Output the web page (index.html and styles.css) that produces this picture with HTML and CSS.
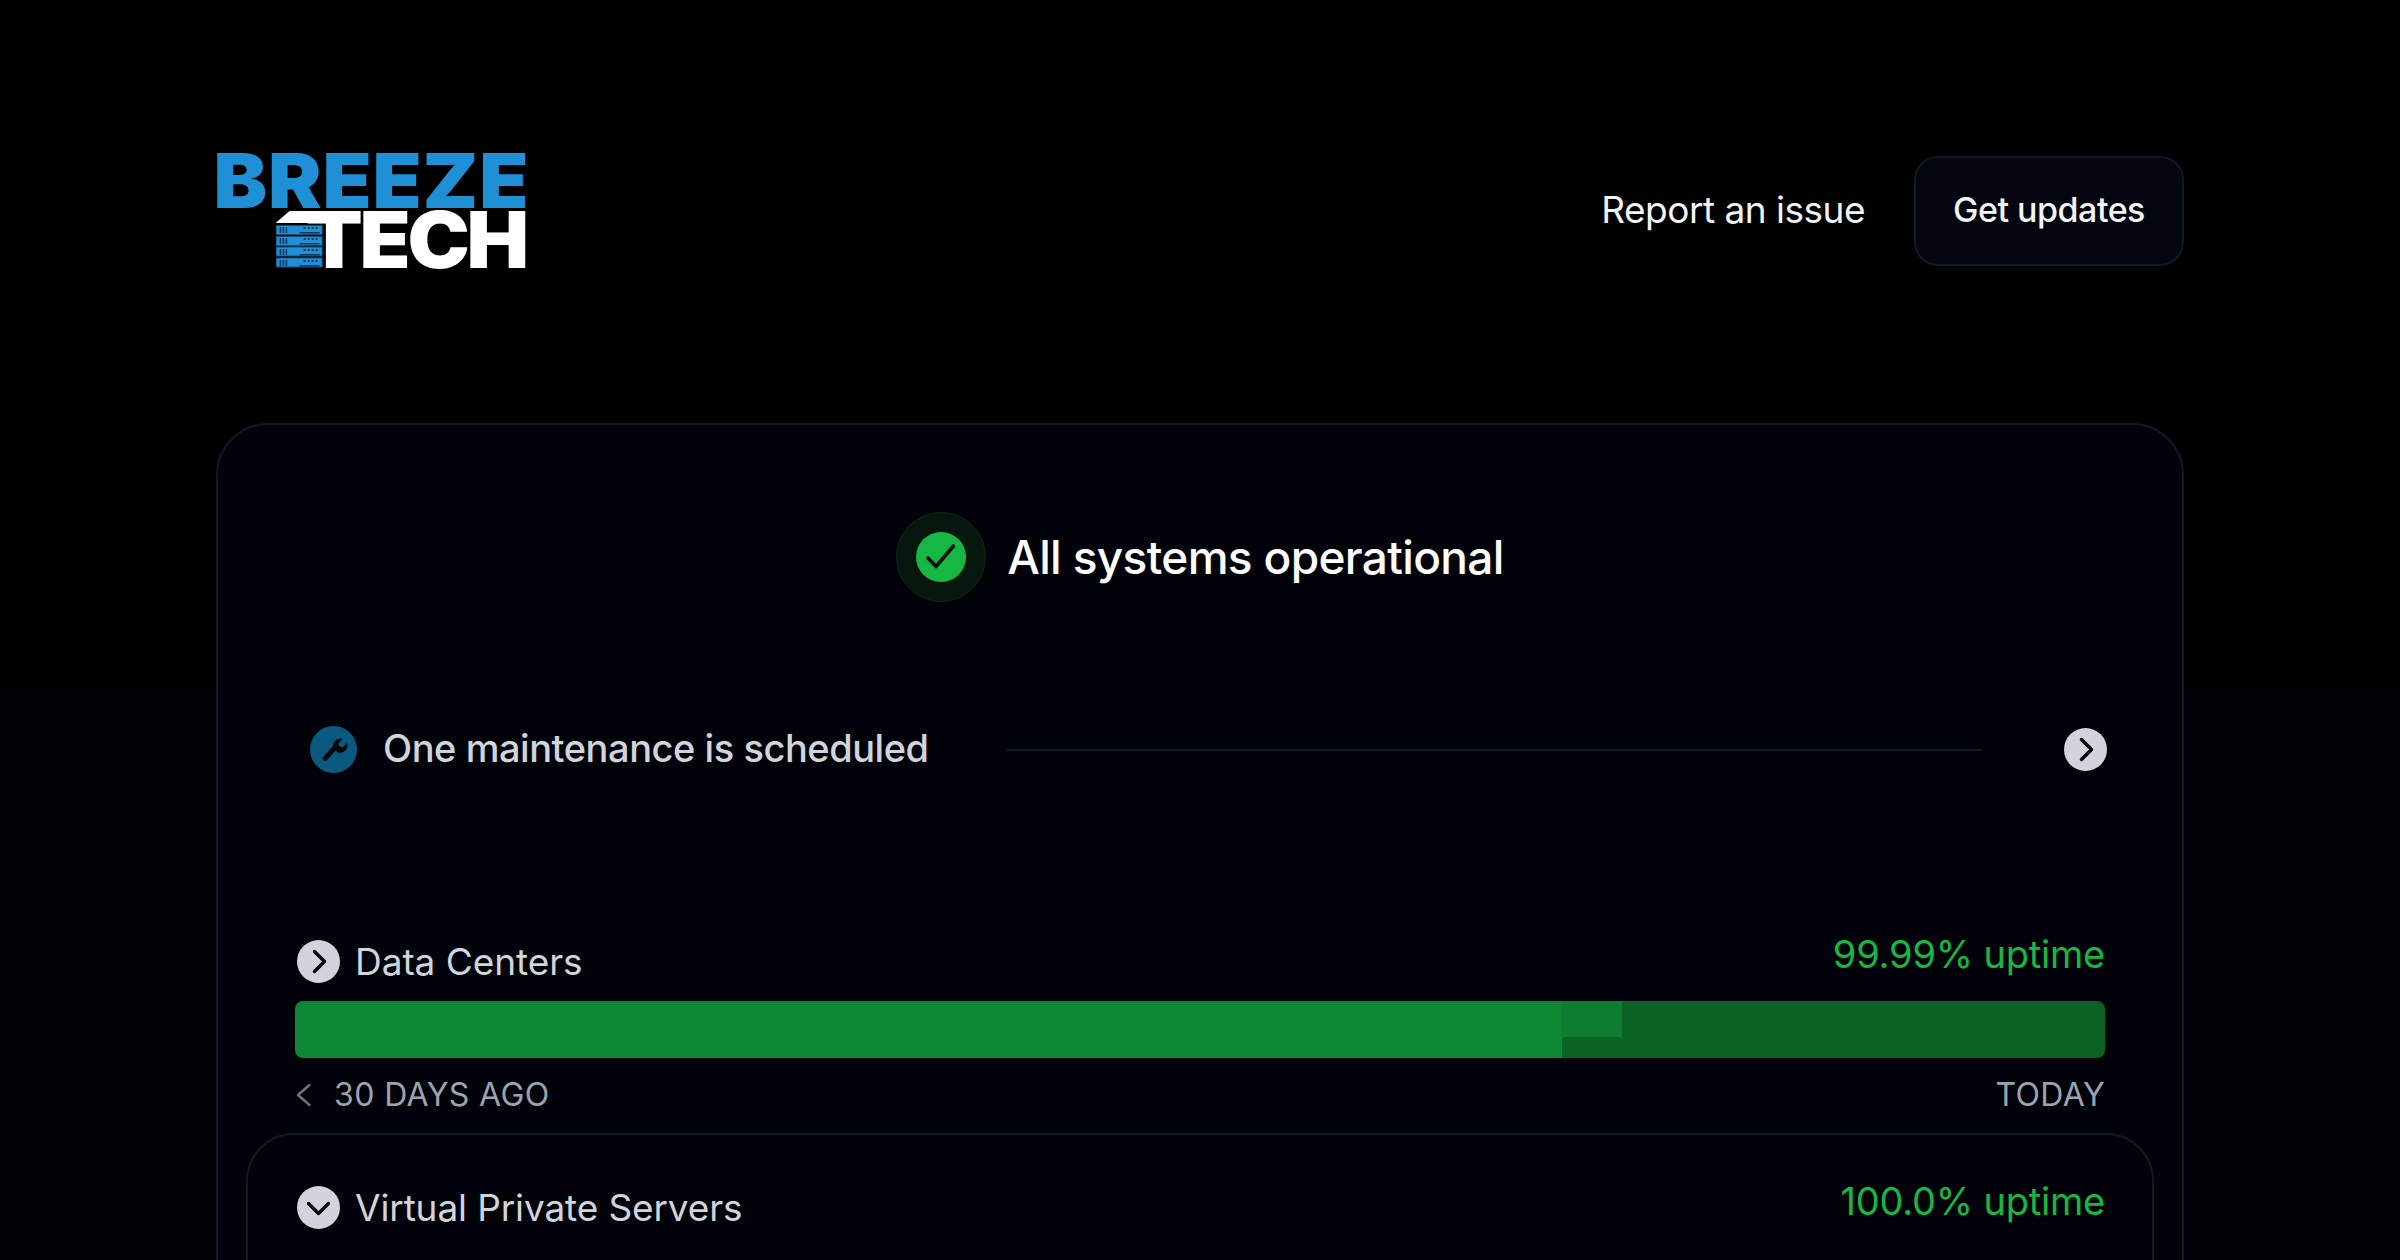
FILE: index.html
```html
<!DOCTYPE html>
<html lang="en">
<head>
    <meta charset="UTF-8">
    <title>Breeze Tech Status</title>
    <link rel="stylesheet" href="styles.css">
</head>
<body>
    <div class="wrap">
        <header class="header">
            <div class="logo">
                <div class="logo-top">BREEZE</div>
                <div class="logo-bottom">
                    <svg class="logo-rack" width="52" height="57" viewBox="0 0 52 57">
                        <polygon points="0,12 13,0 52,0 52,12" fill="#fff"/>
                        <g transform="scale(.935 1)">
                            <g fill="#1f8fd6" stroke="#0d4f7a" stroke-width="1">
                                <rect x="0.5" y="14.5" width="46" height="9"/>
                                <rect x="0.5" y="25.5" width="46" height="9"/>
                                <rect x="0.5" y="36" width="46" height="9"/>
                                <rect x="0.5" y="47" width="46" height="9"/>
                            </g>
                            <g fill="#0b3552">
                                <path d="M4 16h1.5v6H4zM7 16h1.5v6H7zM10 16h1.5v6H10zM28 16h2v2h-2zM32 16h2v2h-2zM36 16h2v2h-2zM40 16h2v2h-2zM24 21h20v1.5H24z"/>
                                <path d="M4 27h1.5v6H4zM7 27h1.5v6H7zM10 27h1.5v6H10zM28 27h2v2h-2zM32 27h2v2h-2zM36 27h2v2h-2zM40 27h2v2h-2zM24 32h20v1.5H24z"/>
                                <path d="M4 38h1.5v6H4zM7 38h1.5v6H7zM10 38h1.5v6H10zM28 38h2v2h-2zM32 38h2v2h-2zM36 38h2v2h-2zM40 38h2v2h-2zM24 43h20v1.5H24z"/>
                                <path d="M4 49h1.5v6H4zM7 49h1.5v6H7zM10 49h1.5v6H10zM28 49h2v2h-2zM32 49h2v2h-2zM36 49h2v2h-2zM40 49h2v2h-2zM24 54h20v1.5H24z"/>
                            </g>
                        </g>
                    </svg>
                    <span class="logo-tech">TECH</span>
                </div>
            </div>
            <nav class="nav">
                <a class="nav-link" href="#">Report an issue</a>
                <a class="nav-button" href="#">Get updates</a>
            </nav>
        </header>

        <main class="card">
            <div class="status">
                <span class="status-ring">
                    <svg width="50" height="50" viewBox="0 0 50 50">
                        <circle cx="25" cy="25" r="25" fill="#14b843"/>
                        <path d="M12 26l8 8.500L37.500 14" fill="none" stroke="#03130a" stroke-width="3.600" stroke-linecap="round" stroke-linejoin="round"/>
                    </svg>
                </span>
                <h1 class="status-text">All systems operational</h1>
            </div>

            <div class="notice">
                <svg width="47" height="47" viewBox="0 0 47 47">
                    <circle cx="23.5" cy="23.5" r="23.5" fill="#0a5a80"/>
                    <path d="M15 32.500l9.500-10.500" fill="none" stroke="#03040c" stroke-width="5" stroke-linecap="round"/>
                    <path d="M23.200 19.500a7 7 0 0 1 9.600-6.600l-4.300 4.300.9 3.100 3.100.9 4.300-4.300a7 7 0 0 1-9.700 9z" fill="#03040c"/>
                </svg>
                <span class="notice-text">One maintenance is scheduled</span>
                <span class="notice-line"></span>
                <svg class="round-icon" viewBox="0 0 43 43">
                    <circle cx="21.5" cy="21.5" r="21.5" fill="#d1d5db"/>
                    <path d="M17.500 11.500l10 10-10 10" fill="none" stroke="#03040c" stroke-width="3.400" stroke-linecap="round" stroke-linejoin="round"/>
                </svg>
            </div>

            <section class="group">
                <div class="group-head">
                    <div class="group-title">
                        <svg class="round-icon" viewBox="0 0 43 43">
                            <circle cx="21.5" cy="21.5" r="21.5" fill="#d1d5db"/>
                            <path d="M17.500 11.500l10 10-10 10" fill="none" stroke="#03040c" stroke-width="3.400" stroke-linecap="round" stroke-linejoin="round"/>
                        </svg>
                        <span>Data Centers</span>
                    </div>
                    <span class="uptime">99.99% uptime</span>
                </div>

                <div class="bar">
                    <div class="bar-past"></div>
                    <div class="bar-day"><div class="bar-day-low"></div></div>
                    <div class="bar-recent"></div>
                </div>

                <div class="bar-labels">
                    <span class="bar-label-left">
                        <svg width="17" height="24" viewBox="0 0 17 24">
                            <path d="M14.500 2L3 12l11.500 10" fill="none" stroke="#6b7280" stroke-width="2.400" stroke-linecap="round" stroke-linejoin="round"/>
                        </svg>
                        30 DAYS AGO
                    </span>
                    <span>TODAY</span>
                </div>

                <div class="subcard">
                    <div class="group-head">
                        <div class="group-title">
                            <svg class="round-icon" viewBox="0 0 43 43">
                                <circle cx="21.5" cy="21.5" r="21.5" fill="#d1d5db"/>
                                <path d="M11.500 17.500l10 10 10-10" fill="none" stroke="#03040c" stroke-width="3.400" stroke-linecap="round" stroke-linejoin="round"/>
                            </svg>
                            <span>Virtual Private Servers</span>
                        </div>
                        <span class="uptime">100.0% uptime</span>
                    </div>
                </div>
            </section>
        </main>
    </div>
</body>
</html>
```

FILE: styles.css
```css
html, body { margin: 0; height: 1260px; overflow: hidden; }
body {
    font-family: Inter, "Liberation Sans", sans-serif;
    background: linear-gradient(#000 0, #000 688px, #020309 688px);
    color: #d1d5db;
}
.wrap { width: 1968px; margin: 0 auto; }

/* header */
.header { display: flex; justify-content: space-between; align-items: center; padding-top: 152px; }
.logo {
    display: flex;
    flex-direction: column;
    align-items: flex-end;
    width: 310px;
    height: 118px;
    font-weight: 900;
    transform: scaleX(1.07);
    transform-origin: right center;
}
.logo-top { margin: 2px -3px 0 0; color: #1f8fd6; font-size: 75px; line-height: 54px; letter-spacing: 0.8px; white-space: nowrap; }
.logo-bottom { display: flex; align-items: flex-start; margin-top: 3px; }
.logo-rack { margin-right: -24px; }
.logo-tech { color: #fff; font-size: 78px; line-height: 57px; letter-spacing: -3px; }
.nav { display: flex; align-items: center; gap: 49px; }
.nav-link { padding-bottom: 3px; color: #f3f4f6; font-size: 37px; letter-spacing: -0.5px; text-decoration: none; }
.nav-button {
    display: flex;
    align-items: center;
    justify-content: center;
    width: 270px;
    height: 110px;
    box-sizing: border-box;
    padding-bottom: 3px;
    border: 2px solid #111827;
    border-radius: 24px;
    background: #03060f;
    color: #f3f4f6;
    font-size: 34px;
    font-weight: 500;
    letter-spacing: -0.5px;
    text-decoration: none;
}

/* main card */
.card {
    margin-top: 153px;
    padding-top: 87px;
    height: 1000px;
    border: 2px solid #111827;
    border-radius: 52px;
    background: #02030a;
}
.status { display: flex; justify-content: center; align-items: center; gap: 21px; }
.status-ring {
    display: flex;
    align-items: center;
    justify-content: center;
    width: 90px;
    height: 90px;
    box-sizing: border-box;
    border: 1px solid #0a2a15;
    border-radius: 50%;
    background: #06170d;
}
.status-text { margin: 0; color: #fff; font-size: 46px; font-weight: 500; letter-spacing: -0.65px; }

.notice { display: flex; align-items: center; margin: 123px 75px 0 92px; }
.notice-text { margin-left: 26px; padding-bottom: 2px; font-size: 38px; font-weight: 500; letter-spacing: -0.45px; white-space: nowrap; }
.notice-line { flex: 1; height: 2px; margin: 2px 82px 0 78px; background: #111827; }
.round-icon { width: 43px; height: 43px; flex: none; }

/* component groups */
.group { margin: 166px 77px 0; }
.group-head { display: flex; justify-content: space-between; align-items: flex-start; }
.group-title { display: flex; align-items: center; gap: 15px; padding-left: 2px; font-size: 37px; letter-spacing: -0.05px; }
.uptime { margin-top: 3px; color: #14b843; font-size: 38px; line-height: 24px; letter-spacing: -0.2px; }

.bar { display: flex; height: 57px; margin-top: 17px; border-radius: 8px; overflow: hidden; }
.bar-past { flex: 21; background: #0e8734; }
.bar-day { flex: 1; background: #0e7c31; }
.bar-day-low { height: 21px; margin-top: 36px; background: #0a6224; border-radius: 4px 4px 0 0; }
.bar-recent { flex: 8; background: #0a6224; }

.bar-labels { display: flex; justify-content: space-between; margin-top: 19px; color: #9ca3af; font-size: 32px; line-height: 36px; letter-spacing: 0.4px; }
.bar-label-left { display: flex; align-items: center; gap: 22px; }

.subcard {
    margin: 20px -49px 0;
    padding: 50px 47px 120px;
    border: 2px solid #111827;
    border-radius: 48px;
}
.subcard .uptime { margin-top: 4px; }
.subcard .group-title { letter-spacing: -0.12px; }
```
